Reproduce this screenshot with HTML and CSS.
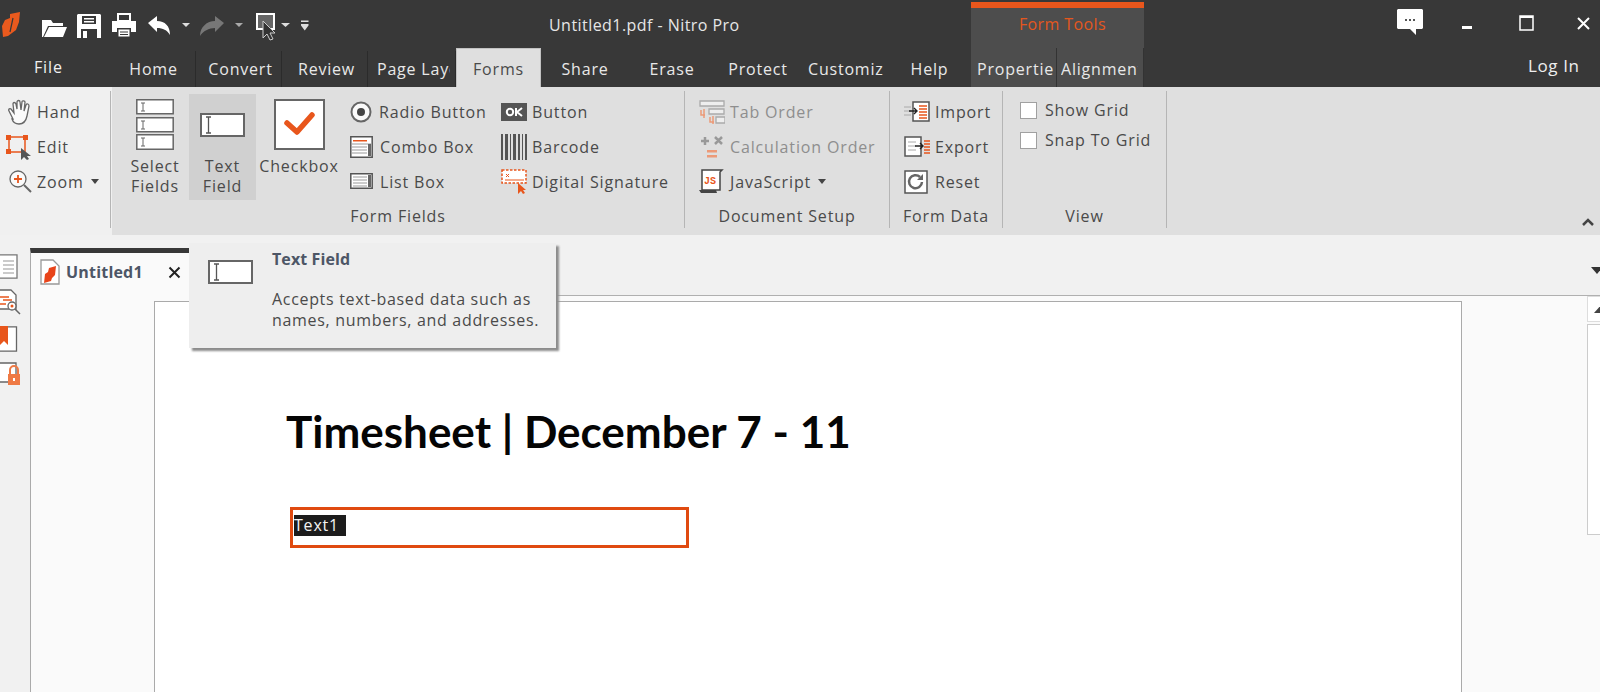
FILE: index.html
```html
<!DOCTYPE html>
<html lang="en">
<head>
<meta charset="utf-8">
<title>Untitled1.pdf - Nitro Pro</title>
<link rel="stylesheet" href="styles.css">
</head>
<body>
<div class="app">
  <header class="titlebar">
    <div class="qat">
      <svg width="320" height="48" viewBox="0 0 320 48">
        <path d="M10 14l10-2-1 10-3 8-4 3-4 3-5 1-1-11 3-6 5-2z" fill="#ea5a1e"/>
        <path d="M13 18l-3 14" stroke="#383838" stroke-width="1.200" fill="none"/>
        <path d="M42 20h9l2 3h10v3H48l-5 11h-1z" fill="#fff"/>
        <path d="M49 27h18l-4 10H44z" fill="#fff"/>
        <path d="M78 14h22l1 1v23H77V15z" fill="#fff"/>
        <path d="M82 16h14v8H82z" fill="#383838"/>
        <path d="M84 18h10v1.500H84zM84 21h10v1.500H84z" fill="#fff"/>
        <path d="M81 29h16v9H81z" fill="#383838"/>
        <path d="M83 31h4v7h-4z" fill="#fff"/>
        <path d="M118 14h12v7h-12z" fill="none" stroke="#fff" stroke-width="2"/>
        <path d="M112 21h24v11h-5v-4h-14v4h-5z" fill="#fff"/>
        <path d="M118 29h12v8h-12z" fill="#fff" stroke="#383838"/>
        <path d="M120 32h8M120 34.500h8" stroke="#383838"/>
        <path d="M148 23l9-7v5c8 0 13 5 13 14-3-5-7-7-13-7v4z" fill="#fff"/>
        <path d="M224 23l-9-7v5c-8 0-15 6-15 15 3-5 9-8 15-8v4z" fill="#777"/>
        <path d="M182 23h8l-4 4z" fill="#ddd"/>
        <path d="M235 23h8l-4 4z" fill="#aaa"/>
        <path d="M281 23h9l-4.500 4z" fill="#ddd"/>
        <path d="M301 20.500h7.500V22H301zM301 24h7.500v1.500l-3.750 5-3.750-5z" fill="#ddd"/>
        <path d="M257 14h17v15h-17z" fill="#666" stroke="#fff" stroke-width="2"/>
        <path d="M263 21v17l4-4 3 6 3-1-3-6h5z" fill="#333" stroke="#ccc"/>
      </svg>
    </div>
    <div class="doc-title">Untitled1.pdf - Nitro Pro</div>
    <div class="ctx-head">Form Tools</div>
    <div class="win">
      <svg class="win-chat" width="26" height="26" viewBox="0 0 26 26"><path d="M1 0h24l1 1v18l-1 1h-6v6l-6-6H1l-1-1V1z" fill="#fff"/><path d="M8 10h2v2H8zM12 10h2v2h-2zM16 10h2v2h-2z" fill="#555"/></svg>
      <svg class="win-min" width="10" height="4" viewBox="0 0 10 4"><path d="M0 0h10v3H0z" fill="#fff"/></svg>
      <svg class="win-max" width="15" height="16" viewBox="0 0 15 16"><path d="M1 1h13v14H1z" fill="none" stroke="#fff" stroke-width="1.500"/><path d="M1 1h13v2H1z" fill="#fff"/></svg>
      <svg class="win-close" width="13" height="13" viewBox="0 0 13 13"><path d="M1 1l11 11M12 1L1 12" stroke="#fff" stroke-width="2"/></svg>
    </div>
  </header>

  <nav class="tabsbar">
    <div class="file-tab">File</div>
    <div class="tab">Home</div>
    <div class="tab tab-nudge">Convert</div>
    <div class="tab tab-nudge">Review</div>
    <div class="tab tab-clip"><span class="clip-text">Page Layout</span></div>
    <div class="tab tab-active">Forms</div>
    <div class="tab tab-plain tab-nudge1">Share</div>
    <div class="tab tab-plain tab-nudge1">Erase</div>
    <div class="tab tab-plain">Protect</div>
    <div class="tab tab-plain tab-cust"><span class="clip-text">Customize</span></div>
    <div class="tab tab-help">Help</div>
    <div class="tab tab-ctx tab-clip-ctx"><span class="clip-text">Properties</span></div>
    <div class="tab tab-ctx tab-clip-ctx"><span class="clip-text">Alignment</span></div>
    <div class="login">Log In</div>
  </nav>

  <section class="ribbon">
    <div class="rib-left">
      <div class="rib-left-inner">
        <div class="row"><svg class="ico" width="24" height="26" viewBox="0 0 24 26"><path d="M5 20L1 12c-1-2 1-3 2-2l3 4-1-9c0-2 2-2 3 0l1 5V3c0-2 3-2 3 0l1 8 1-8c0-2 3-1 3 0l-1 9 2-6c1-2 3-1 3 1l-2 10c-1 5-3 8-8 8-4 0-6-2-7-5z" fill="#fafafa" stroke="#666" stroke-width="1.300"/></svg><span>Hand</span></div>
        <div class="row"><svg class="ico" width="26" height="26" viewBox="0 0 26 26"><path d="M3 3h16v15H3z" fill="none" stroke="#e8561c" stroke-width="1.500"/><path d="M0 1h5v5H0zM17 1h5v5h-5zM0 15h5v5H0z" fill="#e8561c"/><path d="M15 14v12l3-3 3 3 2-1-2-3h4z" fill="#555"/></svg><span>Edit</span></div>
        <div class="row"><svg class="ico" width="24" height="24" viewBox="0 0 24 24"><circle cx="10" cy="9" r="8" fill="#fafafa" stroke="#666" stroke-width="1.300"/><path d="M10 5v8M6 9h8" stroke="#e8561c" stroke-width="1.800"/><path d="M16 15l7 7" stroke="#666" stroke-width="2"/></svg><span>Zoom</span><i class="caret caret-zoom"></i></div>
      </div>
    </div>
    <div class="rib-main">
      <div class="group group-fields">
        <div class="group-body">
          <div class="big big-select">
            <svg class="big-ico" width="38" height="51" viewBox="0 0 38 51">
              <g fill="#fff" stroke="#666" stroke-width="1.500"><path d="M.800.800h36.400v14H.800zM.800 18.800h36.400v14H.800zM.800 35.800h36.400v14.400H.800z"/></g>
              <path d="M5 4h4M7 4v8M5 12h4M5 22h4M7 22v8M5 30h4M5 39h4M7 39v8M5 47h4" stroke="#666" fill="none"/>
            </svg>
            <span>Select<br>Fields</span>
          </div>
          <div class="big big-text">
            <span class="big-ico-wrap"><svg width="45" height="24" viewBox="0 0 45 24"><path d="M1 1h43v22H1z" fill="#fff" stroke="#666" stroke-width="2"/><path d="M6 4h5M8.500 4v16M6 20h5" stroke="#555" fill="none" stroke-width="1.300"/></svg></span>
            <span>Text<br>Field</span>
          </div>
          <div class="big big-check">
            <svg class="big-ico" width="51" height="51" viewBox="0 0 51 51"><path d="M1 1h49v49H1z" fill="#fff" stroke="#666" stroke-width="2"/><path d="M13 24l10 9 15-17" fill="none" stroke="#e8561c" stroke-width="5.500" stroke-linecap="round" stroke-linejoin="round"/></svg>
            <span>Checkbox</span>
          </div>
          <div class="col col-a">
            <div class="row"><svg class="ico" width="22" height="22" viewBox="0 0 22 22"><circle cx="11" cy="11" r="9.500" fill="#fafafa" stroke="#666" stroke-width="2"/><circle cx="11" cy="11" r="4" fill="#444"/></svg><span>Radio Button</span></div>
            <div class="row"><svg class="ico" width="23" height="22" viewBox="0 0 23 22"><path d="M.800.800h21.400v20.400H.800z" fill="#fff" stroke="#555" stroke-width="1.500"/><path d="M3 4h14v1.500H3z" fill="#e8561c"/><path d="M2 8h19M2 11h15M2 14h15M2 17h15" stroke="#999"/><path d="M18 8h3v12h-3z" fill="#666"/></svg><span>Combo Box</span></div>
            <div class="row"><svg class="ico" width="23" height="18" viewBox="0 0 23 18"><path d="M.800.800h21.400v14.400H.800z" fill="#fff" stroke="#555" stroke-width="1.500"/><path d="M3 4h14M3 7h14M3 10h14M3 13h14" stroke="#999"/><path d="M18 2h3v12h-3z" fill="#666"/></svg><span>List Box</span></div>
          </div>
          <div class="col col-b">
            <div class="row"><svg class="ico" width="26" height="18" viewBox="0 0 26 18"><path d="M0 0h26v18H0z" fill="#555"/><circle cx="9" cy="9" r="3.200" fill="none" stroke="#fff" stroke-width="2"/><path d="M15 5v8M21 5l-5 4 5 4" fill="none" stroke="#fff" stroke-width="2"/></svg><span>Button</span></div>
            <div class="row"><svg class="ico" width="26" height="26" viewBox="0 0 26 26"><path d="M0 0h2v26H0zM4 0h3v26H4zM9 0h1v26H9zM12 0h3v26h-3zM17 0h2v26h-2zM21 0h1v26h-1zM24 0h2v26h-2z" fill="#555"/></svg><span>Barcode</span></div>
            <div class="row"><svg class="ico" width="26" height="25" viewBox="0 0 26 25"><path d="M1 1h24v13H1z" fill="#fff" stroke="#e8561c" stroke-dasharray="2.500 1.500" stroke-width="1.500"/><path d="M5 5l3 3M8 5L5 8" stroke="#e8561c"/><path d="M4 11h19" stroke="#e8561c"/><path d="M17 14v11l3-3 2 3 2-1-2-3h3z" fill="#e8561c"/></svg><span>Digital Signature</span></div>
          </div>
        </div>
        <div class="group-label">Form Fields</div>
      </div>

      <div class="group group-doc">
        <div class="group-body">
          <div class="col">
            <div class="row row-off"><svg class="ico" width="26" height="24" viewBox="0 0 26 24"><path d="M1 1h24v5H1zM10 9h15v5H10zM17 17h9v6h-9z" fill="#eee" stroke="#aaa" stroke-width="1.300"/><path d="M2 10v5h4M5 9v9M11 17v5h4M14 16v8" stroke="#ec9a78" stroke-width="1.500" fill="none"/></svg><span>Tab Order</span></div>
            <div class="row row-off"><svg class="ico" width="26" height="24" viewBox="0 0 26 24"><path d="M2 6h8M6 2v8M16 2l7 7M23 2l-7 7" stroke="#999" stroke-width="2.500"/><path d="M8 15h10v2.500H8zM8 20h10v2.500H8z" fill="#ec9a78"/></svg><span>Calculation Order</span></div>
            <div class="row"><svg class="ico" width="26" height="25" viewBox="0 0 26 25"><path d="M3 1h20l-2 2v18H3z" fill="#fff" stroke="#444" stroke-width="1.500"/><path d="M0 21h17l1 3H2z" fill="#444"/><text class="js-mark" x="5" y="15">JS</text></svg><span>JavaScript</span><i class="caret caret-js"></i></div>
          </div>
        </div>
        <div class="group-label">Document Setup</div>
      </div>

      <div class="group group-data">
        <div class="group-body">
          <div class="col">
            <div class="row"><svg class="ico" width="26" height="21" viewBox="0 0 26 21"><path d="M9 1h16v19H9z" fill="#fff" stroke="#555" stroke-width="1.500"/><path d="M0 6h7M0 10h7M0 14h7" stroke="#aaa"/><path d="M5 10h7M10 7l3 3-3 3" stroke="#222" fill="none" stroke-width="1.400"/><path d="M15 5h8M15 8h8M15 11h8M15 14h8M15 17h8" stroke="#e8561c" stroke-width="1.500"/></svg><span>Import</span></div>
            <div class="row"><svg class="ico" width="26" height="21" viewBox="0 0 26 21"><path d="M1 1h16v19H1z" fill="#fff" stroke="#555" stroke-width="1.500"/><path d="M4 6h8M4 10h8M4 14h8" stroke="#aaa"/><path d="M11 10h7M16 7l3 3-3 3" stroke="#222" fill="none" stroke-width="1.400"/><path d="M20 5h6M20 8h6M20 11h6M20 14h6M20 17h6" stroke="#e8561c" stroke-width="1.500"/></svg><span>Export</span></div>
            <div class="row row-reset"><svg class="ico" width="24" height="24" viewBox="0 0 24 24"><path d="M1 1h22v22H1z" fill="#fff" stroke="#555" stroke-width="1.500"/><path d="M18 12a6.500 6.500 0 1 1-2-5" fill="none" stroke="#666" stroke-width="2.500"/><path d="M19 4v6h-6z" fill="#666"/></svg><span>Reset</span></div>
          </div>
        </div>
        <div class="group-label">Form Data</div>
      </div>

      <div class="group group-view">
        <div class="group-body">
          <div class="col col-view">
            <div class="check-row"><i class="cb"></i><span>Show Grid</span></div>
            <div class="check-row"><i class="cb"></i><span>Snap To Grid</span></div>
          </div>
        </div>
        <div class="group-label">View</div>
      </div>
      <div class="rib-rest">
        <svg width="12" height="8" viewBox="0 0 12 8"><path d="M1 7l5-5 5 5" fill="none" stroke="#444" stroke-width="2.500"/></svg>
      </div>
    </div>
  </section>

  <div class="workspace">
    <aside class="rail">
      <svg width="18" height="25" viewBox="0 0 18 25"><path d="M0 .800h17v23.400H0" fill="#fff" stroke="#777" stroke-width="1.300"/><path d="M3 7h11M3 11h11M3 15h11M3 19h11" stroke="#bbb" stroke-width="1.300"/></svg>
      <svg width="21" height="27" viewBox="0 0 21 27"><path d="M0 1h11l5 5v14H0" fill="#fff" stroke="#666" stroke-width="1.300"/><path d="M0 8h9M3 11h9M0 15h6" stroke="#e8561c" stroke-width="1.300"/><circle cx="12" cy="17" r="4" fill="#fff" stroke="#666" stroke-width="1.300"/><circle cx="12" cy="17" r="1.500" fill="#e8561c"/><path d="M15 20l5 5" stroke="#666" stroke-width="1.500"/></svg>
      <svg width="18" height="26" viewBox="0 0 18 26"><path d="M0 .800h16.500v24.400H0" fill="#fff" stroke="#666" stroke-width="1.300"/><path d="M0 0h8v19l-4-4-4 4z" fill="#e8561c"/></svg>
      <svg width="21" height="24" viewBox="0 0 21 24"><path d="M0 1h16v19H0" fill="#fff" stroke="#666" stroke-width="1.300"/><path d="M8 12h12v11H8z" fill="#ef7a45"/><path d="M10 12V8a4 4 0 0 1 8 0v4" fill="none" stroke="#ef7a45" stroke-width="2"/><path d="M13 16h2v3h-2z" fill="#fff"/></svg>
    </aside>
    <div class="docs">
      <div class="docstrip">
        <div class="doctab">
          <svg class="doctab-ico" width="20" height="26" viewBox="0 0 20 26"><path d="M1 1h12l6 6v18H1z" fill="#fff" stroke="#999" stroke-width="1.300"/><path d="M9 9l7-2-1 9-3 3-1 3-7 2 1-9 3-2z" fill="#e8441a"/></svg>
          <span class="doctab-name">Untitled1</span>
          <svg class="doctab-x" width="13" height="13" viewBox="0 0 13 13"><path d="M1.500 1.500l10 10M11.500 1.500l-10 10" stroke="#222" stroke-width="2"/></svg>
        </div>
        <i class="strip-caret"></i>
      </div>
      <div class="docarea">
        <div class="page">
          <h1 class="sheet-title">Timesheet | December 7 - 11</h1>
          <div class="field"><span class="field-sel">Text1</span></div>
        </div>
        <div class="scroll">
          <div class="scroll-btn"><i class="scroll-arrow"></i></div>
          <div class="scroll-thumb"></div>
        </div>
      </div>
    </div>
  </div>
</div>

<div class="tip">
  <svg class="tip-ico" width="45" height="24" viewBox="0 0 45 24"><path d="M1 1h43v22H1z" fill="#fff" stroke="#666" stroke-width="2"/><path d="M6 4h5M8.500 4v16M6 20h5" stroke="#555" fill="none" stroke-width="1.300"/></svg>
  <div class="tip-body">
    <div class="tip-title">Text Field</div>
    <div class="tip-text">Accepts text-based data such as<br>names, numbers, and addresses.</div>
  </div>
</div>
</body>
</html>
```

FILE: styles.css
```css
* { box-sizing: border-box; }
html, body { margin: 0; height: 692px; overflow: hidden; }
body { position: relative; font-family: "Open Sans", "Noto Sans", sans-serif; font-size: 16px; color: #4a4a4a; letter-spacing: .85px; background: #fafafa; }
.app { width: 1600px; height: 692px; display: flex; flex-direction: column; overflow: hidden; }
svg { display: block; flex: none; }

.titlebar { height: 48px; background: #383838; display: flex; flex: none; color: #eee; }
.qat { width: 549px; flex: none; }
.doc-title { width: 422px; flex: none; line-height: 50px; color: #e6e6e6; white-space: nowrap; letter-spacing: .45px; }
.ctx-head { width: 173px; flex: none; background: linear-gradient(#e8561c 0 6px, #4d4d4d 6px); margin-top: 2px; padding-left: 10px; color: #e4571e; text-align: center; line-height: 45px; letter-spacing: .4px; }
.win { flex: 1; position: relative; display: flex; }
.win-chat { margin: 9px 0 0 253px; }
.win-min { margin: 26px 0 0 39px; }
.win-max { margin: 15px 0 0 47px; }
.win-close { margin: 17px 0 0 43px; }

.tabsbar { height: 39px; background: #383838; display: flex; flex: none; color: #e8e8e8; }
.file-tab { width: 112px; padding-left: 34px; line-height: 38px; color: #f0f0f0; }
.tab { width: 87px; flex: none; overflow: hidden; white-space: nowrap; text-align: center; line-height: 37px; border-right: 1px solid #2b2b2b; margin-top: 3px; height: 36px; letter-spacing: .8px; }
.tab:nth-child(2) { width: 84px; }
.tab:nth-child(3), .tab:nth-child(4) { width: 86px; }
.tab-nudge { padding-left: 4px; }
.tab-nudge1 { padding-left: 2px; }
.clip-text { display: block; overflow: hidden; white-space: nowrap; }
.tab-clip { width: 88px; text-align: left; padding: 0 5px 0 9px; }
.tab-active { width: 85px; height: 39px; margin-top: 0; background: #dfdfdf; border: 1px solid #c2c2c2; border-bottom: 0; color: #4a4a4a; line-height: 41px; }
.tab-plain { border-right-color: #383838; }
.tab-cust { text-align: left; padding: 0 5px 0 6px; }
.tab-help { width: 82px; border-right-color: #383838; }
.tab-ctx { margin-top: 0; height: 39px; line-height: 42px; background: #4d4d4d; border-right: 1px solid #333; text-align: left; }
.tab-clip-ctx { width: 86px; padding: 0 3px 0 6px; }
.tab-clip-ctx + .tab-clip-ctx { width: 87px; padding: 0 5px 0 4px; }
.login { margin-left: 384px; line-height: 36px; color: #eee; font-size: 17px; letter-spacing: .6px; }

.ribbon { height: 148px; display: flex; flex: none; background: #f0f0f0; }
.rib-left { width: 112px; flex: none; padding: 4px 1px 7px 0; }
.rib-left-inner { height: 100%; border-right: 1px solid #b5b5b5; padding: 3px 0 0 8px; }
.rib-left-inner .ico { margin-right: 5px; }
.rib-left-inner .row:nth-child(2) .ico { margin-right: 5px; margin-left: -2px; }
.rib-main { flex: 1; display: flex; background: #dfdfdf; padding: 4px 0 7px; }
.group { display: flex; flex-direction: column; border-right: 1px solid #b5b5b5; flex: none; }
.group-body { flex: 1; display: flex; }
.group-label { height: 24px; line-height: 24px; text-align: center; white-space: nowrap; }
.group-fields { width: 573px; }
.group-fields .group-body { padding-left: 18px; }
.group-doc { width: 205px; }
.group-doc .group-body, .group-data .group-body { padding-left: 14px; }
.group-data { width: 113px; }
.group-view { width: 164px; }
.group-view .group-body { padding-left: 17px; }
.rib-rest { flex: 1; display: flex; justify-content: flex-end; align-items: flex-end; padding: 0 6px 2px 0; }

.row { height: 35px; display: flex; align-items: center; white-space: nowrap; }
.col { padding-top: 3px; }
.col-a { width: 151px; margin-left: 6px; }
.col-a .ico { margin-right: 7px; }
.col-b .ico { margin-right: 5px; }
.group-doc .ico, .group-data .ico { margin-right: 5px; }
.group-data .row-reset .ico { margin-right: 7px; }
.row-off { color: #8e8e8e; }
.js-mark { font: bold 10px "Liberation Mono", monospace; fill: #e8561c; letter-spacing: 0; }

.caret { display: block; width: 0; height: 0; border: 4.5px solid transparent; border-top: 5px solid #444; border-bottom: 0; margin-left: 7px; }

.big { display: flex; flex-direction: column; align-items: center; padding-top: 5px; height: 106px; margin-top: 3px; text-align: center; line-height: 20px; white-space: nowrap; }
.big-ico { margin-bottom: 6px; }
.big-ico-wrap { height: 51px; margin-bottom: 6px; display: flex; align-items: center; }
.big-select { width: 50px; }
.big-text { width: 67px; margin-left: 9px; background: #d0d0d0; }
.big-check { width: 86px; margin-right: 2px; }

.col-view { padding-top: 4px; }
.check-row { height: 30px; display: flex; align-items: center; white-space: nowrap; }
.cb { display: block; width: 17px; height: 17px; background: #fff; border: 1px solid #a0a0a0; margin-right: 8px; }

.workspace { flex: 1; display: flex; min-height: 0; }
.rail { width: 30px; flex: none; background: #f1f1f1; padding-top: 19px; display: flex; flex-direction: column; gap: 10px; }
.docs { flex: 1; display: flex; flex-direction: column; min-width: 0; }
.docstrip { height: 61px; flex: none; background: #f1f1f1; border-bottom: 1px solid #b0b0b0; position: relative; display: flex; justify-content: space-between; align-items: flex-start; }
.doctab { width: 165px; height: 48px; margin-top: 13px; background: #fafafa; border-top: 5px solid #383838; border-left: 1px solid #aaa; display: flex; padding-left: 9px; font-weight: 700; color: #4d5666; letter-spacing: .2px; position: relative; }
.doctab-ico { margin-top: 6px; }
.doctab-name { margin: 6px 0 0 6px; line-height: 26px; }
.doctab-x { margin: 13px 0 0 25px; }
.strip-caret { width: 0; height: 0; border: 6px solid transparent; border-top: 7px solid #333; border-bottom: 0; margin: 32px -3px 0 0; }

.docarea { flex: 1; display: flex; justify-content: space-between; background: #fafafa; border-left: 1px solid #aaa; min-height: 0; overflow: hidden; }
.page { width: 1308px; margin: 5px 0 0 123px; background: #fff; border: 1px solid #aaa; border-bottom: 0; padding: 99px 0 0 131px; flex: none; }
.sheet-title { margin: 0; font: 700 44px/60px "Lato", "Open Sans", sans-serif; color: #050505; letter-spacing: 0; white-space: nowrap; }
.field { width: 399px; height: 41px; margin: 46px 0 0 4px; border: 3px solid #e04a10; padding: 5px 0 0 1px; background: #fff; }
.field-sel { display: block; width: 52px; height: 21px; background: #1c1c1c; color: #f4f4f4; font-size: 16px; line-height: 21px; letter-spacing: .8px; }

.scroll { width: 13px; flex: none; overflow: hidden; }
.scroll-btn { height: 26px; width: 26px; background: #fff; border: 1px solid #ddd; position: relative; margin-bottom: 2px; }
.scroll-arrow { position: absolute; left: 6px; top: 8px; width: 0; height: 0; border: 7px solid transparent; border-bottom: 8px solid #444; border-top: 0; }
.scroll-thumb { height: 211px; width: 26px; background: #fff; border: 1px solid #ccc; }

.tip { position: absolute; left: 189px; top: 243px; width: 367px; height: 105px; background: #eee; box-shadow: 3px 3px 2px #8c8c8c; display: flex; padding: 17px 0 0 19px; }
.tip-body { margin: -12px 0 0 19px; white-space: nowrap; }
.tip-title { font-weight: 700; color: #4d5666; letter-spacing: .1px; line-height: 22px; }
.tip-text { margin-top: 19px; line-height: 21px; letter-spacing: .68px; }
```
